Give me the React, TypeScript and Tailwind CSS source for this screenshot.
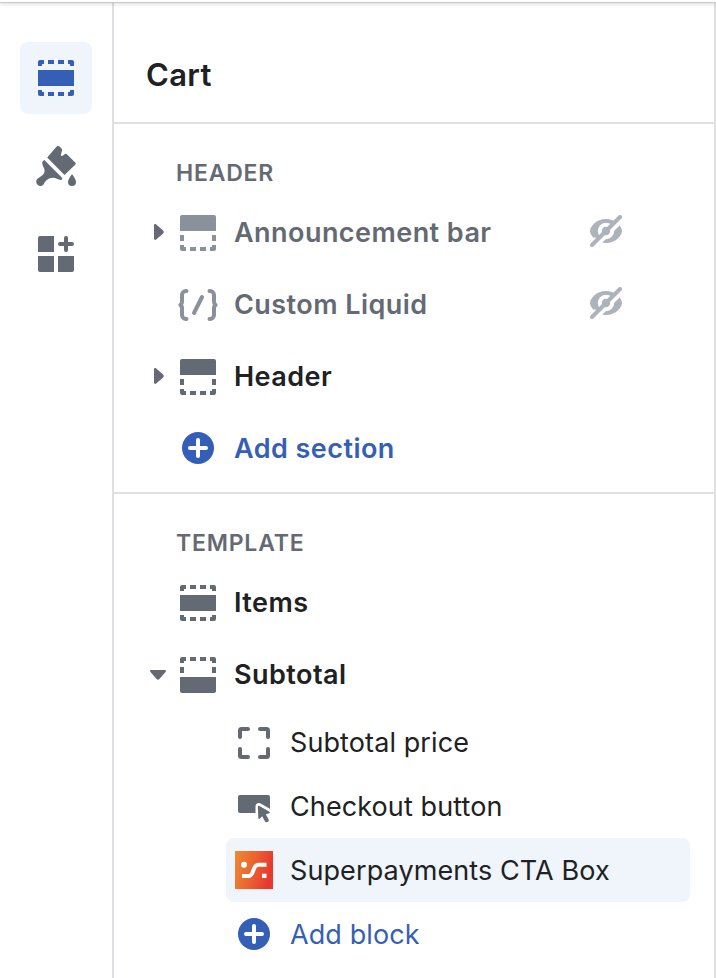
import React from "react";

interface IconProps {
  className?: string;
}

function SectionIcon({ className }: IconProps) {
  return (
    <svg width="36" height="36" viewBox="0 0 36 36" fill="currentColor" className={className}>
      <path d="M2 0h4v4H4v2H0V2a2 2 0 0 1 2-2zM10 0h6v4h-6zM20 0h6v4h-6zM30 0h4a2 2 0 0 1 2 2v4h-4V4h-2z" />
      <path d="M0 10h36v16H0z" />
      <path d="M0 30h4v2h2v4H2a2 2 0 0 1-2-2zM10 32h6v4h-6zM20 32h6v4h-6zM32 30h4v4a2 2 0 0 1-2 2h-4v-4h2z" />
    </svg>
  );
}

function HeaderIcon({ className }: IconProps) {
  return (
    <svg width="36" height="36" viewBox="0 0 36 36" fill="currentColor" className={className}>
      <path d="M2 0h32a2 2 0 0 1 2 2v14H0V2a2 2 0 0 1 2-2z" />
      <path d="M0 20h4v6H0zM32 20h4v6h-4z" />
      <path d="M0 30h4v2h2v4H2a2 2 0 0 1-2-2zM10 32h6v4h-6zM20 32h6v4h-6zM32 30h4v4a2 2 0 0 1-2 2h-4v-4h2z" />
    </svg>
  );
}

function FooterIcon({ className }: IconProps) {
  return (
    <svg width="36" height="36" viewBox="0 0 36 36" fill="currentColor" className={className}>
      <path d="M2 0h4v4H4v2H0V2a2 2 0 0 1 2-2zM10 0h6v4h-6zM20 0h6v4h-6zM30 0h4a2 2 0 0 1 2 2v4h-4V4h-2z" />
      <path d="M0 10h4v6H0zM32 10h4v6h-4z" />
      <path d="M0 20h36v14a2 2 0 0 1-2 2H2a2 2 0 0 1-2-2z" />
    </svg>
  );
}

function LiquidIcon({ className }: IconProps) {
  return (
    <svg width="40" height="32" viewBox="0 0 40 32" fill="none" stroke="currentColor" strokeWidth="4" strokeLinecap="round" strokeLinejoin="round" className={className}>
      <path d="M8.500 2H8a4 4 0 0 0-4 4v7q0 1.500-1.500 3q1.500 1.500 1.500 3V26a4 4 0 0 0 4 4h.5" />
      <path d="M31.500 2h.5a4 4 0 0 1 4 4v7q0 1.500 1.500 3q-1.500 1.500-1.500 3V26a4 4 0 0 1-4 4h-.5" />
      <path d="M24 8l-8 16" />
    </svg>
  );
}

function BrushIcon() {
  return (
    <svg width="40" height="40" viewBox="0 0 40 40" fill="currentColor">
      <path d="M20.700.6a2 2 0 0 1 2.800 0l2 2a2 2 0 0 1 .5 2L25 8.400c-.4 1.400.6 2 1.600 1.400l2-1.500a2 2 0 0 1 2.500.1l8.300 8.300a1.200 1.200 0 0 1 0 1.700L28.500 29 11.200 11.400z" />
      <path d="M8.300 13.900l17.500 17.500c.9.900.4 2.400-.8 2.500-2.900.1-5-2.100-8-2.100-3.600 0-6.200 1.800-8.500 4.800A4.200 4.200 0 1 1 2.500 32c3-1.800 6.100-3.600 6.100-7.500 0-2.600-2.300-4.500-2.400-7.500-.1-1 .9-2.400 2.100-3.100z" />
      <path d="M36 28.500c.5 0 .8.400 1 .9 1 2 3 4 3 6.600a4 4 0 0 1-8 0c0-2.600 2-4.600 3-6.600.2-.5.500-.9 1-.9z" />
    </svg>
  );
}

function AppsIcon() {
  return (
    <svg width="36" height="36" viewBox="0 0 36 36" fill="currentColor">
      <path d="M2 0h14v16H0V2a2 2 0 0 1 2-2zM0 20h16v16H2a2 2 0 0 1-2-2zM20 20h16v14a2 2 0 0 1-2 2H20z" />
      <path d="M28 2v12M22 8h12" stroke="currentColor" strokeWidth="4" strokeLinecap="round" />
    </svg>
  );
}

function HiddenIcon() {
  return (
    <svg width="32" height="32" viewBox="0 0 32 32" className="text-[#adb3bd]">
      <path d="M16 4C6.500 4 0 11.500 0 16S6.500 28 16 28s16-7.500 16-12S25.500 4 16 4z" fill="currentColor" />
      <circle cx="16" cy="16" r="8.200" fill="white" />
      <path d="M4 32L32 4" stroke="white" strokeWidth="5.600" />
      <path d="M0 27L5 22L9 27L4 32zM26 0L32 6V10L24 7z" fill="white" />
      <circle cx="16" cy="16" r="4.200" fill="currentColor" />
      <path d="M2 30L30 2" stroke="currentColor" strokeWidth="4" strokeLinecap="round" />
    </svg>
  );
}

function PlusIcon() {
  return (
    <svg width="32" height="32" viewBox="0 0 32 32">
      <circle cx="16" cy="16" r="16" fill="currentColor" />
      <path d="M16 8v16M8 16h16" stroke="white" strokeWidth="4" strokeLinecap="round" />
    </svg>
  );
}

function BlockIcon() {
  return (
    <svg width="32" height="32" viewBox="0 0 32 32" fill="none" stroke="currentColor" strokeWidth="4" strokeLinecap="round" className="mt-0.5">
      <path d="M2 10V3.500Q2 2 3.500 2H10M22 2h6.500Q30 2 30 3.500V10M30 22v6.500q0 1.500-1.500 1.500H22M10 30H3.500Q2 30 2 28.500V22" />
    </svg>
  );
}

function ButtonIcon() {
  return (
    <svg width="34" height="30" viewBox="0 0 34 30" fill="currentColor" className="ml-0.5 mt-2">
      <path d="M2 0h28a2 2 0 0 1 2 2v16H2a2 2 0 0 1-2-2V2a2 2 0 0 1 2-2z" />
      <path d="M21 11.500L34 19V24L25 30L21 22z" fill="white" stroke="white" strokeWidth="7" strokeLinejoin="round" />
      <path d="M21.400 10.900l9.700 5.700c1 .6.800 1.600-.3 1.900l-3 .8 2.700 4.900a2 2 0 0 1-.7 2.700l-.2.100a2 2 0 0 1-2.700-.8l-2.700-4.900-2.200 2.200c-.8.800-1.700.4-1.700-.6l-.4-11c0-1 .7-1.500 1.500-1z" />
    </svg>
  );
}

function SuperIcon() {
  return (
    <svg width="38" height="38" viewBox="0 0 38 38">
      <defs>
        <linearGradient id="super" x1="0" y1="0" x2="1" y2="0.25">
          <stop offset="0" stopColor="#ec8c33" />
          <stop offset="0.5" stopColor="#ec6530" />
          <stop offset="1" stopColor="#e8392f" />
        </linearGradient>
      </defs>
      <path d="M0 0h38v38H0z" fill="url(#super)" />
      <circle cx="9" cy="13.700" r="3" fill="white" />
      <path d="M7 25h6.500c6 0 3.500-11.300 10-11.300h8" fill="none" stroke="white" strokeWidth="4" />
      <path d="M27 22.700h4.500V27H27z" fill="white" />
    </svg>
  );
}

function Arrow({ open }: { open?: boolean }) {
  return (
    <svg width="16" height="16" viewBox="0 0 16 16" fill="#636a74">
      {open ? (
        <path d="M1.400 4h13.200c1.300 0 1.800 1.200.9 2.100l-6.100 7c-.8.900-2 .9-2.800 0L.5 6.100C-.4 5.200.1 4 1.400 4z" />
      ) : (
        <path d="M4 1.400v13.200c0 1.300 1.300 1.800 2.200.9l6.900-6.100c.9-.8.900-2 0-2.800L6.200.5C5.300-.4 4 .1 4 1.400z" />
      )}
    </svg>
  );
}

interface RowProps {
  label: string;
  icon: React.ReactNode;
  arrow?: "closed" | "open";
  hidden?: boolean;
  color?: string;
}

function SectionRow({ label, icon, arrow, hidden, color = "text-[#202123]" }: RowProps) {
  return (
    <div className="flex h-[72px] items-center pl-9 pr-[92px]">
      <div className="w-7 shrink-0">{arrow && <Arrow open={arrow === "open"} />}</div>
      <div className="flex w-10 shrink-0 justify-center text-[#636a74]">{icon}</div>
      <span className={`ml-4 grow pt-px text-[27px] font-semibold leading-10 tracking-[0.45px] ${color}`}>{label}</span>
      {hidden && <div className="-mt-0.5"><HiddenIcon /></div>}
    </div>
  );
}

function BlockRow({ label, icon, selected, color = "text-[#202123]" }: { label: string; icon: React.ReactNode; selected?: boolean; color?: string }) {
  return (
    <div className={`ml-28 mr-6 flex h-16 items-center rounded-lg pl-2 ${selected ? "bg-[#f0f5fc]" : ""}`}>
      <div className="flex w-10 shrink-0 justify-center text-[#636a74]">{icon}</div>
      <span className={`ml-4 whitespace-nowrap pt-px text-[27px] leading-10 tracking-[0.1px] ${color}`}>{label}</span>
    </div>
  );
}

export default function App() {
  return (
    <main className="flex h-[978px] w-[716px] flex-col overflow-hidden bg-white font-['Inter',sans-serif]">
      <div className="relative z-10 h-[3px] shrink-0 border-b border-[#c9c9cb] bg-white shadow-[0_1px_4px_rgba(0,0,0,0.18)]"></div>
      <div className="-mt-[3px] flex grow">
        <nav className="flex w-[114px] shrink-0 flex-col gap-4 border-r-2 border-[#dfdfe4] pl-5 pt-[42px] text-[#636a74]">
          <button className="flex size-[72px] items-center justify-center rounded-lg bg-[#f0f5fc] text-[#355fb7]">
            <SectionIcon />
          </button>
          <button className="flex size-[72px] items-center justify-center">
            <BrushIcon />
          </button>
          <button className="flex size-[72px] items-center justify-center">
            <AppsIcon />
          </button>
        </nav>

        <div className="grow border-r-2 border-[#dfdfe4]">
          <div className="flex h-[124px] items-center border-b-2 border-[#dfdfe4] pl-8 pt-[27px]">
            <h1 className="text-[31px] font-semibold leading-10 tracking-[0.3px] text-[#202123]">Cart</h1>
          </div>

          <section className="border-b-2 border-[#dfdfe4] pb-2">
            <h2 className="flex h-[72px] items-center pl-[62px] pt-[26px] text-[23px] font-semibold tracking-[0.8px] text-[#636a74]">HEADER</h2>
            <SectionRow label="Announcement bar" icon={<HeaderIcon className="mt-0.5 text-[#8a919b]" />} arrow="closed" hidden color="text-[#636a74]" />
            <SectionRow label="Custom Liquid" icon={<LiquidIcon className="mt-0.5 text-[#8a919b]" />} hidden color="text-[#636a74]" />
            <SectionRow label="Header" icon={<HeaderIcon className="mt-0.5" />} arrow="closed" />
            <SectionRow label="Add section" icon={<span className="text-[#355fb7]"><PlusIcon /></span>} color="text-[#355fb7]" />
          </section>

          <section>
            <h2 className="flex h-[72px] items-center pl-[62px] pt-[26px] text-[23px] font-semibold tracking-[0.8px] text-[#636a74]">TEMPLATE</h2>
            <SectionRow label="Items" icon={<SectionIcon className="mt-0.5" />} />
            <SectionRow label="Subtotal" icon={<FooterIcon className="mt-0.5" />} arrow="open" />
            <BlockRow label="Subtotal price" icon={<BlockIcon />} />
            <BlockRow label="Checkout button" icon={<ButtonIcon />} />
            <BlockRow label="Superpayments CTA Box" icon={<SuperIcon />} selected />
            <BlockRow label="Add block" icon={<span className="text-[#355fb7]"><PlusIcon /></span>} color="text-[#355fb7]" />
          </section>
        </div>
      </div>
    </main>
  );
}
